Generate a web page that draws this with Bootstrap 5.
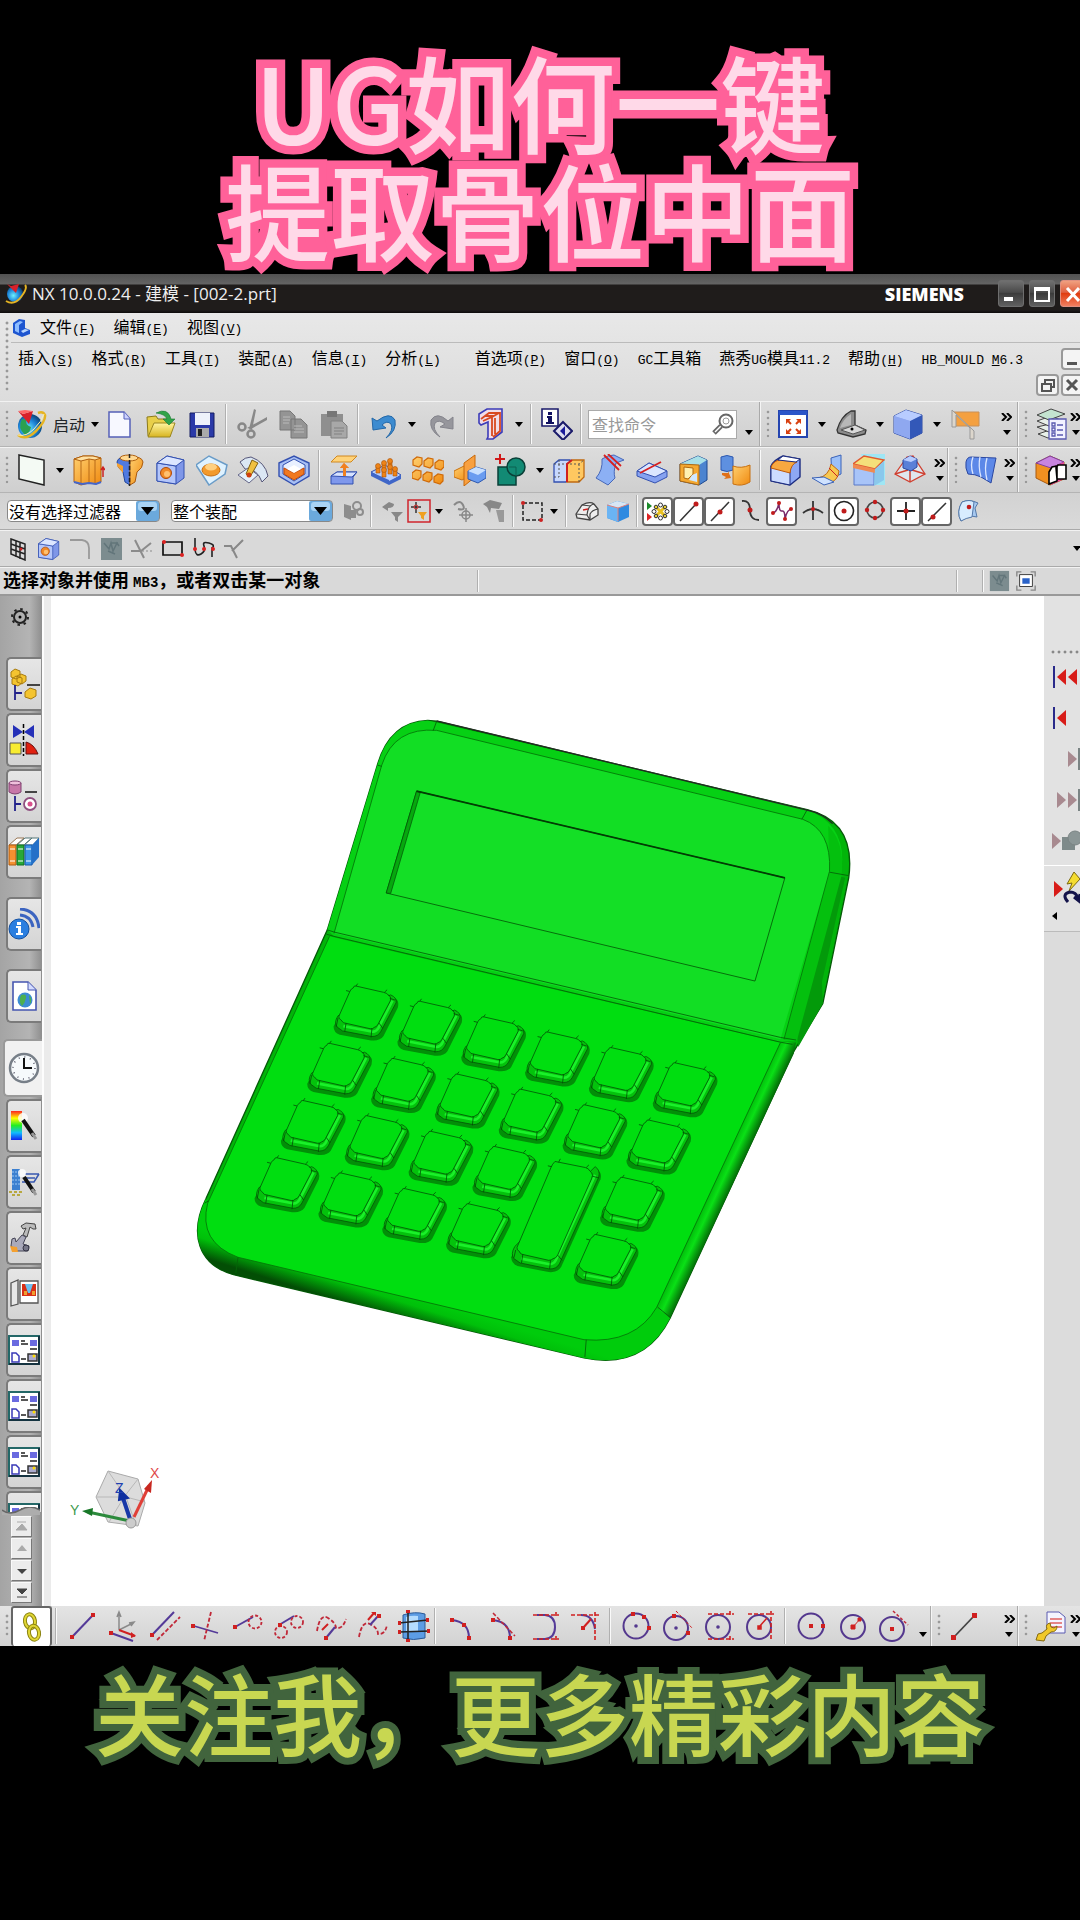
<!DOCTYPE html>
<html lang="zh-CN">
<head>
<meta charset="utf-8">
<meta name="viewport" content="width=device-width, initial-scale=1">
<title>NX 10.0.0.24 - 建模</title>
<link href="https://cdn.jsdelivr.net/npm/bootstrap@5.3.0/dist/css/bootstrap.min.css" rel="stylesheet">
<style>
body{background:#000;font-family:"Liberation Sans","Noto Sans CJK SC",sans-serif;font-size:16px;line-height:20px;color:#000;overflow-x:hidden}
svg{display:block;flex:none}
.headline{font:500 105px/108px "Noto Sans CJK SC",sans-serif;color:#ffd9e8;-webkit-text-stroke:17px #ff6199;stroke-linejoin:round;paint-order:stroke fill;padding:45px 0 13px}
.follow{font:500 89px/90px "Noto Sans CJK SC",sans-serif;color:#c8d751;-webkit-text-stroke:14px #41643d;stroke-linejoin:round;paint-order:stroke fill;padding:20px 0 164px}
.app{overflow:hidden}
.titlebar{height:39px;background:linear-gradient(#515151,#646464 10px,#1f1c1b 11px,#1f1c1b 36px,#0c0b0b);color:#eee;font-family:"Open Sans","Noto Sans CJK SC",sans-serif;font-size:17px}
.brand{font-weight:800;font-size:18px;margin-right:34px;color:#fff}
.winbtn{width:26px;height:27px;border:1px solid #6e6e6e;border-radius:3px;background:linear-gradient(#707070,#4a4a4a 45%,#3c3c3c 50%,#606060);padding:0;margin-right:5px;flex:none}
.winbtn.shut{background:linear-gradient(#f0a080,#e06040 45%,#e03c10 50%,#f08060);border-color:#e09080;margin-right:-6px}
.menus{background:linear-gradient(#e8e8e8,#dcdcdc);font-family:"Noto Sans CJK SC",sans-serif}
.menus a{color:#000;text-decoration:none;white-space:nowrap}
.lat{font-family:"Liberation Mono",monospace;font-size:13px}
.mrow1{height:29px;gap:18px}
.mrow1 svg{margin-right:-9px}
.mrow2{height:32px;gap:18px;border-top:1px solid #bbb;padding-left:7px}
.mdi{width:23px;height:22px;border:2px solid #999;border-radius:4px;background:#f4f4f4;padding:0;flex:none}
.mrow2,.mdis{margin-right:-4px}
.mdis{height:27px;gap:2px}
.grip{width:4px;flex:none;align-self:stretch;margin:8px 2px 8px 5px;background:radial-gradient(circle at 2px 2px,#999 1px,#f5f5f5 2px,transparent 2px) 0 0/4px 6px}
.tb{background:linear-gradient(#dcdcdc,#cfcfcf);border-top:1px solid #f2f2f2;border-bottom:1px solid #b4b4b4;height:46px}
.tb .btn,.sel .btn{padding:0;border:0;border-radius:3px;display:flex;align-items:center;justify-content:center;flex:1 1 0;height:38px;min-width:0}
.tb svg{width:32px;height:32px}
.tb .cr{flex:0 0 16px}
.tb .cr svg,.sel .cr svg{width:8px;height:5px}
.vr2{width:1px;align-self:stretch;margin:2px 4px;background:#fafafa;box-shadow:-1px 0 #b0b0b0;flex:none}
.grp{display:flex;align-items:center;flex:none}
.g1{width:41px}.g3{width:123px}.g3c{width:98px}.g1c{width:57px}
.gv{width:215px}.gf{width:304px}.gf2{width:432px}.gf3{width:166px}.gl{width:374px}.gc{width:125px}
.dock{border-left:1px solid #f5f5f5;box-shadow:-1px 0 #aaa;align-self:stretch;display:flex;align-items:center;flex:none}
.d258{width:258px}.d70{width:70px}.d87{width:87px}.d62{width:62px}
.tb .more{flex:1 1 16px;flex-direction:column;gap:9px;align-self:stretch;height:auto}
.d258 .more{padding-left:8px}
.tb .more svg.chev{width:11px;height:8px}
.tb .more svg.dn{width:8px;height:5px}
.tb .startbtn{flex:0 0 auto;gap:6px;padding-left:4px;width:88px;justify-content:flex-start;font-family:"Noto Sans CJK SC",sans-serif}
.tb .startbtn svg.dn{width:8px;height:5px}
.search{width:149px;height:29px;background:#fff;border:1px solid #aaa;margin-left:2px;flex:none;padding-right:2px}
.search input{border:0;background:none;font:16px/20px "Noto Sans CJK SC",sans-serif;width:112px;padding:0 3px;outline:0}
.search input::placeholder{color:#999;opacity:1}
.search svg{width:22px;height:22px}
.sel{background:linear-gradient(#d2d2d2,#dadada);height:37px;border-bottom:1px solid #aaa;padding-left:7px}
.sel .btn{flex:0 0 31px;height:29px}
.sel .btn.slim{flex-basis:28px}
.sel .btn.thin{flex-basis:24px}
.sel .btn svg{width:24px;height:24px}
.sel .btn.cr{flex-basis:16px}
.sel .btn.cr svg{width:8px;height:5px}
.sel .btn.on{border:2px solid #666;background:#fff;border-radius:4px}
.sel .btn.edge{margin-right:-5px}
.pick{appearance:none;height:22px;border:1px solid #888;border-radius:4px;padding:0 0 0 1px;font:16px/20px "Noto Sans CJK SC",sans-serif;color:#000;flex:none;
background:#fff url("data:image/svg+xml,%3Csvg xmlns='http://www.w3.org/2000/svg' width='23' height='20'%3E%3Crect width='23' height='20' rx='2' fill='%236ba9dc'/%3E%3Crect x='2' y='1' width='19' height='9' rx='3' fill='%23a9d3f4'/%3E%3Cpath d='M5 6h13l-6.500 8z' fill='%23000'/%3E%3C/svg%3E") right center no-repeat}
.p1{width:153px;margin-right:11px}.p2{width:162px;margin-right:6px}
.plain{background:#d9d9d9;border-top:1px solid #f2f2f2;padding-left:2px}
.status{height:29px;background:#d9d9d9;border-top:1px solid #f2f2f2;border-bottom:2px solid #999;font:bold 18px/26px "Noto Sans CJK SC",sans-serif;padding-left:3px}
.status .lat{font-size:14px}
.st1{width:475px}.st2{width:25px}.st3{width:96px}
.rail{width:42px;background:linear-gradient(90deg,#a4a4a4,#b4b4b4 70%,#8e8e8e);flex:none;gap:2px;position:relative;height:1010px;overflow:hidden}
.rail .cog{height:59px;border:0;background:none;padding:0 2px 18px 0}
.tab{height:54px;width:35px;margin-left:6px;border:2px solid #7b7b7b;border-right:0;border-radius:5px 0 0 5px;background:linear-gradient(#e6e6e6,#d4d4d4);padding:0;display:flex;align-items:center;justify-content:flex-start;flex:none}
.tab svg{width:32px;height:32px}
.tab.sp{margin-top:16px}
.tab.live{margin:14px 0 0 3px;width:39px;height:58px;padding-left:3px;background:#f1f1f1;border-color:#999}
.railnav{position:absolute;left:0;right:0;bottom:0;height:94px;background:linear-gradient(90deg,#a4a4a4,#b4b4b4 70%,#8e8e8e);padding:4px 0 0 11px;display:flex;flex-direction:column;gap:1px}
.railnav button{width:21px;height:21px;padding:0;border:1px solid #777;border-color:#fafafa #777 #777 #fafafa;background:#ececec}
.tear{position:absolute;left:2px;top:-5px}
.gutter{width:9px;background:#ebebeb;border-left:2px solid #fdfdfd;flex:none}
.view{background:#fff;min-width:0}
.side{width:36px;background:#dcdcdc;flex:none;overflow:hidden}
.side .pan{border-bottom:1px solid #bbb;background:#e2e2e2;padding-top:54px;height:336px}
.side button{display:block;border:0;background:none;padding:0 0 0 6px;height:41px}
.side .dots{height:4px;margin-left:7px;background:radial-gradient(circle at 2px 2px,#888 1px,#f5f5f5 2px,transparent 2px) 0 0/6px 4px;margin-bottom:2px}
.side .play{border-top:1px solid #fff;margin-top:4px;padding-top:1px}
.bot{height:40px;border:0;background:linear-gradient(#e4e4e4,#d2d2d2)}
.bot .link{flex:0 0 41px;height:40px;background:#fff;border:2px solid #666;border-bottom:0}
</style>
</head>
<body>
<svg width="0" height="0" class="position-absolute" aria-hidden="true">
<defs>
<linearGradient id="gb" x1="0" y1="0" x2="1" y2="1"><stop offset="0" stop-color="#cfe2ff"/><stop offset="1" stop-color="#3f6fd8"/></linearGradient>
<linearGradient id="go" x1="0" y1="0" x2="1" y2="1"><stop offset="0" stop-color="#ffd070"/><stop offset="1" stop-color="#f08a10"/></linearGradient>
<linearGradient id="gy" x1="0" y1="0" x2="0" y2="1"><stop offset="0" stop-color="#fff6a0"/><stop offset="1" stop-color="#d8b420"/></linearGradient>
<radialGradient id="gs" cx=".4" cy=".6" r=".6"><stop offset="0" stop-color="#6ff0ff"/><stop offset=".6" stop-color="#1d84d8"/><stop offset="1" stop-color="#0c4a80"/></radialGradient>
<linearGradient id="rb" x1="0" y1="0" x2="0" y2="1"><stop offset="0" stop-color="#f22"/><stop offset=".25" stop-color="#ff0"/><stop offset=".5" stop-color="#2e2"/><stop offset=".75" stop-color="#1bf"/><stop offset="1" stop-color="#12e"/></linearGradient>
</defs>
<symbol id="dn" viewBox="0 0 8 5"><path d="M0 0h8L4 5z"/></symbol>
<symbol id="ch" viewBox="0 0 11 8"><path d="M1 0l4 4-4 4M6 0l4 4-4 4" fill="none" stroke="#000" stroke-width="2"/></symbol>
<symbol id="nx" viewBox="0 0 32 32"><circle cx="15" cy="18" r="12" fill="url(#gs)"/><path d="M7 11q-5 9 3 16 5-2 6-8-6-2-5-7z" fill="#2ba050"/><path d="M3 27q8 6 18-4t9-16q-2-4-7-2" fill="none" stroke="#e6b422" stroke-width="2.500"/><path d="M3 27q8 2 16-6t10-15" fill="none" stroke="#fff3b0" stroke-width="1"/><path d="M3 3l5 3 10-3-4 13z" fill="#d8202a"/><path d="M3 3l7-1 8 1-10 3z" fill="#f66"/></symbol>
<symbol id="nxs" viewBox="0 0 24 24"><circle cx="11" cy="12" r="8" fill="url(#gs)"/><path d="M2 19q8 5 15-4t4-12" fill="none" stroke="#e6b422" stroke-width="2"/><path d="M3 2l4 2 8-2-3 9z" fill="#d8202a"/></symbol>
<symbol id="part" viewBox="0 0 20 20"><path d="M2 5l6-4 6 1v8l5 2v4l-8 3-9-4z" fill="#1d55d0"/><path d="M4 6l5-3 3 1-4 3v8l-4-2z" fill="#8dbcff"/><path d="M10 13l4-2 4 1-6 3z" fill="#b8d6ff"/></symbol>
<symbol id="new" viewBox="0 0 32 32"><path d="M5 4h15l6 7v18H5z" fill="#f7f8ff" stroke="#5560b8" stroke-width="1.500"/><path d="M20 4v7h6" fill="#cdd2ff" stroke="#5560b8"/></symbol>
<symbol id="open" viewBox="0 0 32 32"><path d="M2 9l9-1 2 3h12v17H3z" fill="#e8cf4a" stroke="#8c7a1a"/><path d="M3 29l6-14h21l-5 14z" fill="url(#gy)" stroke="#9a8620"/><path d="M11 5q12-6 15 6h4l-6 6-6-6h4q-2-5-11-6z" fill="#31a348" stroke="#1a7a30" stroke-width=".6"/></symbol>
<symbol id="save" viewBox="0 0 32 32"><path d="M4 5h24v24H4z" fill="#2b3aa8" stroke="#141c60"/><path d="M9 5h15v12H9z" fill="#eef2fb"/><path d="M10 20h13v9H10z" fill="#aaa"/><path d="M12 21h4v7h-4z" fill="#222"/></symbol>
<symbol id="cut" viewBox="0 0 32 32"><path d="M18 1l2 1-4 20-3-1zM31 9l0 3-16 9-4-1z" fill="#888"/><circle cx="15" cy="26" r="3.500" fill="none" stroke="#888" stroke-width="2.500"/><circle cx="6" cy="19" r="3.500" fill="none" stroke="#888" stroke-width="2.500"/></symbol>
<symbol id="copy" viewBox="0 0 32 32"><path d="M3 3h10l5 5v14H3zM14 11h10l6 6v13H14z" fill="#949494" stroke="#777"/><path d="M6 9h7M6 12h7M6 15h6M17 18h8M17 21h10M17 24h10" stroke="#bbb"/></symbol>
<symbol id="paste" viewBox="0 0 32 32"><path d="M3 6h22v22H3z" fill="#8f8f8f"/><path d="M9 3h10v6H9z" fill="#777"/><path d="M13 13h11l5 5v12H13z" fill="#a8a8a8" stroke="#808080"/><path d="M16 20h10M16 23h10M16 26h8" stroke="#808080"/></symbol>
<symbol id="undo" viewBox="0 0 32 32"><path d="M4 10l1 12 13-2-4-3q5-5 9-1 3 6-5 14 11-7 9-18-5-9-18 1z" fill="#3c8bd0" stroke="#2468a8"/></symbol>
<symbol id="redo" viewBox="0 0 32 32"><path d="M28 9v12l-13-2 5-3q-6-5-10-1-3 6 5 14Q4 22 6 12q6-9 17 1z" fill="#96969c" stroke="#84848c"/></symbol>
<symbol id="pipe" viewBox="0 0 32 32"><path d="M4 6l8-5h15v23l-9 7h-6l1-2V14l-7 3-2-2z" fill="#f0dce8" stroke="#3b3bb8" stroke-width="1.600"/><path d="M6 11l8-6h11v18l-7 6M8 13l9-4v19M17 9l7-4M10 8h9M20 10v16" fill="none" stroke="#d84820" stroke-width="1.800"/></symbol>
<symbol id="info" viewBox="0 0 32 32"><path d="M1 1h16v17H1z" fill="#fff" stroke="#1a1a6a" stroke-width="1.600"/><path d="M7 4h4v3H7zM6 8h5v6h2v2H5v-2h2v-4H6z" fill="#111160"/><path d="M22 14l9 9-9 9-9-9z" fill="#dde" stroke="#1a1a6a" stroke-width="2"/><path d="M24 18v10l-5-5z" fill="#1a1a9a"/></symbol>
<symbol id="mag" viewBox="0 0 22 22"><path d="M2 20l7-7" stroke="#666" stroke-width="5"/><path d="M3 19l6-6" stroke="#fff" stroke-width="1.500"/><circle cx="14" cy="8" r="6.500" fill="#fff" stroke="#666" stroke-width="2"/><circle cx="14" cy="8" r="3" fill="none" stroke="#999"/></symbol>
<symbol id="fit" viewBox="0 0 32 32"><path d="M2 3h28v26H2z" fill="#fff" stroke="#2545b0" stroke-width="2"/><path d="M2 3h28v4H2z" fill="#2b55c8"/><path d="M9 11h5l-5 5zM24 11v5l-5-5zM9 26v-5l5 5zM24 26h-5l5-5z" fill="#d84010"/><path d="M11 13l3 3M22 13l-3 3M11 24l3-3M22 24l-3-3" stroke="#d84010" stroke-width="2"/></symbol>
<symbol id="part3" viewBox="0 0 32 32"><path d="M2 22q4-14 14-19l4 0v14l11 5-1 4-12 3-15-4z" fill="#8c8c8c" stroke="#333" stroke-width="1.300"/><path d="M5 20q3-9 11-14v11z" fill="#b8b8b8"/><path d="M6 22l14-5 10 5-12 4z" fill="#d8d8d8" stroke="#555"/><circle cx="17" cy="21" r="1.500"/></symbol>
<symbol id="cube" viewBox="0 0 32 32"><path d="M2 8L14 2l16 5v18l-12 6L2 25z" fill="#6a86e0" stroke="#2c48a0"/><path d="M2 8l16 5V31L2 25z" fill="#8fa8f0"/><path d="M18 13l12-6v18l-12 6z" fill="#3358b8"/><path d="M2 8l12-6 16 5-12 6z" fill="#b8ccff"/></symbol>
<symbol id="clip" viewBox="0 0 32 32"><path d="M4 4h25v14H4z" fill="#f4a040" stroke="#c89058"/><path d="M2 2l22 21v8h-4V20L6 7v12H2z" fill="#dcd6cc" stroke="#999"/></symbol>
<symbol id="layer" viewBox="0 0 32 32"><g fill="#e8f0ea" stroke="#444"><path d="M3 26l10 4 10-4-8-4z"/><path d="M2 19l12 5 10-4-9-4z"/><path d="M2 13l12 5 14-5-12-5z"/><path d="M2 7l12 5 16-6L16 1z" fill="#c4e4d0"/></g><path d="M14 11h17v20H14z" fill="#f2f2ff" stroke="#5a5ab0" stroke-width="1.300"/><path d="M17 15h3v3h-3zM17 20h3v3h-3zM17 25h3v3h-3zM22 17h6M22 22h6M22 27h6" fill="none" stroke="#5a5ab0" stroke-width="1.300"/></symbol>
<symbol id="plane" viewBox="0 0 32 32"><path d="M3 1l25 5v25L3 25z" fill="#f4faf4" stroke="#222" stroke-width="1.500"/></symbol>
<symbol id="extr" viewBox="0 0 32 32"><path d="M1 5l9-3h10l8 2v24l-5 2-7-1-8 2-7-3z" fill="url(#go)" stroke="#b06010"/><path d="M1 5l7 2 8-2 6 1 6-2-8-2H10z" fill="#ffe0a0" stroke="#b06010"/><path d="M8 7v23M16 5v24M22 6v23" stroke="#b86a18" fill="none"/><path d="M1 28l8 2 7-1 7 1 5-2" stroke="#46c" fill="none" stroke-width="2"/><path d="M30 23V13m-2 3l2-3 2 3" stroke="#c22" stroke-width="1.500" fill="none"/></symbol>
<symbol id="revo" viewBox="0 0 32 32"><path d="M16 3Q4 2 3 8q0 6 6 10l2 10 5 3z" fill="#4f7ae0" stroke="#23479a"/><path d="M16 3q12-1 13 5 0 6-6 10l-2 10-5 3z" fill="url(#go)" stroke="#a85a10"/><ellipse cx="15" cy="4" rx="9" ry="3" fill="#ffd890" stroke="#b06010"/><path d="M3 9l6 3v7l-6-7z" fill="#f4a030"/><path d="M15.500 0v32" stroke="#222" stroke-width="1.500" stroke-dasharray="4 2"/></symbol>
<symbol id="hole" viewBox="0 0 32 32"><path d="M2 9l10-7 17 4v18l-8 6-19-3z" fill="#7f97e8" stroke="#3350b0"/><path d="M2 9l19 3v18L2 27z" fill="#b4c6fa" stroke="#3350b0"/><path d="M2 9l10-7 17 4-8 6z" fill="#dce6ff" stroke="#3350b0"/><circle cx="11" cy="19" r="5.500" fill="#f08a28" stroke="#b04808"/><circle cx="12" cy="20" r="3" fill="#ffc070"/></symbol>
<symbol id="boss" viewBox="0 0 32 32"><path d="M0 11L13 2l18 9-2 9-16 11z" fill="#dff2ff" stroke="#6a9cc8" stroke-width="1.500"/><ellipse cx="15" cy="16" rx="9" ry="6" fill="#f29a2c" stroke="#c86e10"/><ellipse cx="15" cy="13" rx="6" ry="3.500" fill="#ffd080"/></symbol>
<symbol id="rib" viewBox="0 0 32 32"><path d="M3 8Q8 3 14 3q14 5 17 19l-6 6Q20 14 8 15z" fill="#dbe7f4" stroke="#557"/><path d="M1 21l10-7 10 7-9 8z" fill="#e4f0fa" stroke="#668"/><path d="M15 6l6 3-8 14-4-3z" fill="#f0c040" stroke="#806010"/><circle cx="12" cy="21" r="2.500" fill="#d04010"/></symbol>
<symbol id="pock" viewBox="0 0 32 32"><path d="M1 9l15-7 15 7v13l-15 9-15-9z" fill="#a8c0f4" stroke="#3350b0" stroke-width="1.400"/><path d="M5 11l11-6 11 6v9l-11 7-11-7z" fill="#e8f0ff" stroke="#3350b0"/><path d="M6 14l10 5 10-5v6l-10 6-10-6z" fill="#f07820" stroke="#c04808"/><path d="M9 15l7-4 7 4-7 4z" fill="#fff"/></symbol>
<symbol id="offs" viewBox="0 0 32 32"><path d="M8 2h20l-6 6H2z" fill="#ffd37a" stroke="#d08820"/><path d="M14 20v-6h-3l4-5 5 5h-3v6z" fill="#f08020"/><path d="M2 22l6-4h20l-4 5v7H2z" fill="#7f98ec" stroke="#3350b0"/><path d="M2 22l6-4h20l-5 5z" fill="#d6e2ff" stroke="#3350b0"/><path d="M14 22v-8h-3l4-5 5 5h-3v8z" fill="#f08020"/></symbol>
<symbol id="patt" viewBox="0 0 32 32"><path d="M1 18l14-7 16 10-12 8z" fill="#b8d0ff" stroke="#3350b0"/><path d="M1 18l18 8v5L1 22zM19 27l12-6v4l-12 6z" fill="#3f66c8"/><g fill="#ee8418" stroke="#a85008" stroke-width=".6"><path d="M6 13h4v6H6zM12 10h4v6h-4zM18 7h4v6h-4zM12 17h4v6h-4zM18 14h4v6h-4zM23 16h4v6h-4z"/><circle cx="8" cy="12" r="2.500"/><circle cx="14" cy="9" r="2.500"/><circle cx="20" cy="7" r="2.500"/><circle cx="14" cy="16" r="2.500"/><circle cx="20" cy="13" r="2.500"/><circle cx="25" cy="15" r="2.500"/></g></symbol>
<symbol id="geom" viewBox="0 0 32 32"><g fill="url(#go)" stroke="#d06a08" stroke-width="1.200"><path d="M1 6l4-3 5 1v6l-3 3-6-2zM12 7l4-3 5 1v6l-3 3-6-2zM23 9l4-3 5 1v6l-3 3-6-2zM0 19l4-3 5 1v6l-3 3-6-2zM11 21l4-3 5 1v6l-3 3-6-2zM22 23l4-3 5 1v6l-3 3-6-2z"/></g></symbol>
<symbol id="trim" viewBox="0 0 32 32"><path d="M0 17l10-5 6 2v8l-8 4-8-3z" fill="url(#go)" stroke="#c87010"/><path d="M10 9L21 1v22l-11 9z" fill="#f8a040" stroke="#c86808"/><path d="M14 17l8-4 10 3v8l-8 5-10-4z" fill="#6a9cf0" stroke="#2c58b0"/><path d="M14 17l8-4 10 3-8 5z" fill="#c8e0ff"/></symbol>
<symbol id="unite" viewBox="0 0 32 32"><path d="M3 13h18v18H3z" fill="#128a74" stroke="#0a4038" stroke-width="1.500"/><circle cx="21" cy="13" r="9" fill="#128a74" stroke="#0a4038" stroke-width="1.500"/><path d="M14 13h7v9" fill="none" stroke="#0a6050"/><path d="M5 0v10M0 5h10" stroke="#d01818" stroke-width="2"/></symbol>
<symbol id="split" viewBox="0 0 32 32"><path d="M1 10l5-4h11v17l-4 5H1z" fill="#c8d8fc" stroke="#3350b0" stroke-width="1.300"/><path d="M14 10l5-4h12v17l-5 5H14z" fill="#ffc860" stroke="#c06a10" stroke-width="1.300"/><path d="M1 10h25l5-4M26 10v18M6 6v17H1" fill="none" stroke="#555" stroke-dasharray="2 2"/><path d="M14 28V10l5-4" stroke="#d02020" stroke-width="2" fill="none"/></symbol>
<symbol id="sheet" viewBox="0 0 32 32"><path d="M8 5q6-4 12-4l10 5-8 3q-3 9-1 15l-7 7-12-7q7-8 6-19z" fill="#8cb0f4" stroke="#4868b8"/><path d="M10 1l15 15M14 0l13 12" stroke="#d82020" stroke-width="1.800"/></symbol>
<symbol id="slab" viewBox="0 0 32 32"><path d="M1 17l12-8 18 8v6l-12 6-18-7z" fill="#86a2f0" stroke="#3350b0"/><path d="M1 17l12-8 18 8-12 6z" fill="#dbe6ff" stroke="#3350b0"/><path d="M4 19L25 8" stroke="#d82020" stroke-width="1.800"/></symbol>
<symbol id="shell" viewBox="0 0 32 32"><path d="M2 10l18-8 9 4v20l-8 5-19-4z" fill="#4c84d0" stroke="#1c4890"/><path d="M2 10l18-8 9 4-8 5z" fill="#a8e0e8"/><path d="M2 10l19 1v20L2 27z" fill="#f4a830" stroke="#b06a10"/><path d="M6 13l9 1v6l-5 5-4-1z" fill="#fff0b0" stroke="#b06a10"/><path d="M14 21l5-2v9l-8-2z" fill="#cfe8ff"/></symbol>
<symbol id="thick" viewBox="0 0 32 32"><path d="M2 3q6-3 12 0v13q-6 3-12 0z" fill="#5e90e0" stroke="#2c58b0"/><path d="M14 12q8 3 17-1v17q-8 5-17 2z" fill="url(#go)" stroke="#c87010"/><path d="M3 19h6v-2l3 7-7 1 2-2-4-2z" fill="#e07018"/></symbol>
<symbol id="blend" viewBox="0 0 32 32"><path d="M1 12q3-6 12-10l17 3v18l-10 8-19-4z" fill="#8ea8f4" stroke="#1c2c80" stroke-width="1.400"/><path d="M1 12q5-5 19-1l0 20-19-4z" fill="#cddcff" stroke="#1c2c80"/><path d="M1 14Q2 8 9 6l18 2q-6 2-7 11z" fill="#f8a840" stroke="#c05808"/><path d="M13 2l17 3-4 3-18-2z" fill="#fff" stroke="#1c2c80"/></symbol>
<symbol id="fblend" viewBox="0 0 32 32"><path d="M20 4l10-3v19l-9 4z" fill="#9cc0f8" stroke="#3a62b8"/><path d="M20 10q-2 12-13 14l11 5q9-2 10-12z" fill="#f8c850" stroke="#c06a10"/><path d="M1 24l12-1 10 5-10 3z" fill="#cfe2ff" stroke="#3a62b8"/><path d="M18 14l9 9" stroke="#c22"/></symbol>
<symbol id="draft" viewBox="0 0 32 32"><path d="M8 0h24v31H22z" fill="#9fe6f4"/><path d="M1 12l20 4v15H1z" fill="#a8c4f8" stroke="#5878c8"/><path d="M0 10L11 2l20 4-9 9z" fill="#f4e07a" stroke="#e05a30" stroke-width="1.500"/><path d="M0 10l22 5v4L0 14z" fill="#f08a50"/><path d="M22 15l9-8v19l-10 6z" fill="#8ac8ec"/></symbol>
<symbol id="scale" viewBox="0 0 32 32"><path d="M1 20L13 3l6-1L31 20 16 28z" fill="#dfe6ee" stroke="#d04030" stroke-width="1.300"/><path d="M16 15v13M1 20l13-4M31 20l-13-4" stroke="#d04030" fill="none" stroke-width="1.500"/><path d="M9 6l7-4 7 3v8l-6 4-8-3z" fill="#5a80d8" stroke="#2c48a0"/><path d="M9 6l7-4 7 3-6 3z" fill="#b8ccff"/></symbol>
<symbol id="surf" viewBox="0 0 32 32"><path d="M1 8q1-5 5-5l25 1-5 25-10-6q-6-3-13-3-3-6-2-12z" fill="#5c88e8" stroke="#2c48a0"/><path d="M8 3q-3 8 0 17M15 3q-2 9 1 20M22 4q-3 10 0 22" stroke="#dbe6ff" fill="none" stroke-width="1.300"/></symbol>
<symbol id="asm" viewBox="0 0 32 32"><path d="M1 9l14-7 14 6v17l-14 6L1 24z" fill="#f09020" stroke="#a85a10"/><path d="M1 9l14-7 14 6-13 6z" fill="#c884e0" stroke="#8040a0"/><path d="M16 14l13-6v17l-13 6z" fill="#e84898"/><path d="M14 18l3-5 5-1v15l-8 3zM21 14l2-3 8 0v14h-9z" fill="#fff" stroke="#000" stroke-width="1.600"/></symbol>
<symbol id="lk" viewBox="0 0 24 24"><path d="M3 5l7 2v14l-7-3zM9 11h6v8H9z" fill="#8d8d8d"/><circle cx="16" cy="7" r="4" fill="none" stroke="#8d8d8d" stroke-width="2"/><circle cx="19" cy="13" r="3" fill="none" stroke="#8d8d8d" stroke-width="2"/></symbol>
<symbol id="fl1" viewBox="0 0 24 24"><path d="M11 13h12l-5 5v5l-3-2v-3z" fill="#888"/><path d="M9 3L2 8l6 4V9q6 0 6-4" fill="#888"/></symbol>
<symbol id="fl2" viewBox="0 0 24 24"><path d="M1 1h22v22H1z" fill="none" stroke="#d0242c" stroke-width="1.500"/><path d="M9 3v11M4 8h10" stroke="#333" stroke-width="1.500"/><circle cx="9" cy="8" r="2" fill="none" stroke="#d33"/><path d="M11 13h9l-3 4v4l-3-2v-2z" fill="#f0a020"/></symbol>
<symbol id="fl3" viewBox="0 0 24 24"><path d="M3 6q6-6 9 0t-5 4" fill="none" stroke="#888" stroke-width="2"/><circle cx="15" cy="16" r="4" fill="none" stroke="#888" stroke-width="1.500"/><path d="M15 9v14M8 16h14" stroke="#888" stroke-width="1.500"/></symbol>
<symbol id="fl4" viewBox="0 0 24 24"><path d="M1 5l7-4 12 3-3 6-8-1-1 5-3-6z" fill="#888"/><path d="M14 11h8v12h-5z" fill="#999"/></symbol>
<symbol id="rsel" viewBox="0 0 24 24"><path d="M3 4h19v17H3z" fill="none" stroke="#222" stroke-width="1.500" stroke-dasharray="4 2"/><circle cx="3" cy="4" r="2" fill="#c22"/><circle cx="21" cy="21" r="2" fill="#c22"/></symbol>
<symbol id="wire" viewBox="0 0 24 24"><path d="M1 15l6-9q8-4 12-1l4 5v6l-8 5-13-2z" fill="#eee" stroke="#444" stroke-width="1.300"/><path d="M1 15l11 1 3 5M12 16q1-10 7-11M15 21v-6q2-4 8-5M7 6l9 1" fill="none" stroke="#444" stroke-width="1.200"/><path d="M8 11l5-1" stroke="#c22" stroke-width="1.500"/></symbol>
<symbol id="hl" viewBox="0 0 24 24"><path d="M1 6l10-4 12 3v13l-11 5L1 19z" fill="#2f8ae0"/><path d="M1 6l11 3v14L1 19z" fill="#6ab4f4"/><path d="M1 6l10-4 12 3-11 4z" fill="#d8e6f4"/><path d="M1 6l11 3 11-4M12 9v13" stroke="#e0807a" fill="none"/></symbol>
<symbol id="s0" viewBox="0 0 24 24"><path d="M1 3l5 4-5 4z" fill="#1a8a2a"/><path d="M1 14l5 4-5 4z" fill="#d22"/><path d="M10 8l9 9M19 8l-9 9" stroke="#e8c020" stroke-width="3"/><g fill="#fff" stroke="#333"><circle cx="14.500" cy="6" r="2"/><circle cx="14.500" cy="19" r="2"/><circle cx="8" cy="12.500" r="2"/><circle cx="21" cy="12.500" r="2"/></g><g fill="#e8d030" stroke="#333"><circle cx="10" cy="8" r="1.800"/><circle cx="19" cy="8" r="1.800"/><circle cx="10" cy="17" r="1.800"/><circle cx="19" cy="17" r="1.800"/></g></symbol>
<symbol id="s1" viewBox="0 0 24 24"><path d="M3 22L20 4" stroke="#333" stroke-width="1.500"/><circle cx="19" cy="5" r="2.500" fill="#c01c1c"/></symbol>
<symbol id="s2" viewBox="0 0 24 24"><path d="M3 22L21 3" stroke="#333" stroke-width="1.500"/><circle cx="12" cy="13" r="2.500" fill="#c01c1c"/></symbol>
<symbol id="s3" viewBox="0 0 24 24"><path d="M3 2q8-1 8 9t9 10" fill="none" stroke="#333" stroke-width="1.800"/><circle cx="11" cy="11" r="2.500" fill="#c01c1c"/></symbol>
<symbol id="s4" viewBox="0 0 24 24"><path d="M3 14q4-1 6-10 0 9 3 8t3 8q2-10 7-10" fill="none" stroke="#7a2a6a" stroke-width="1.500"/><g fill="#c01c1c"><circle cx="3" cy="14" r="2"/><circle cx="9" cy="4" r="2"/><circle cx="15" cy="20" r="2"/><circle cx="21" cy="10" r="2"/></g></symbol>
<symbol id="s5" viewBox="0 0 24 24"><path d="M12 2v19M2 14q10-8 20 0" fill="none" stroke="#333" stroke-width="1.800"/><circle cx="12" cy="10" r="2" fill="#c01c1c"/></symbol>
<symbol id="s6" viewBox="0 0 24 24"><circle cx="12" cy="12" r="9.500" fill="none" stroke="#222" stroke-width="1.600"/><circle cx="12" cy="12" r="2.500" fill="#c01c1c"/></symbol>
<symbol id="s7" viewBox="0 0 24 24"><circle cx="12" cy="11" r="8" fill="none" stroke="#444" stroke-width="1.600"/><g fill="#c01c1c"><circle cx="12" cy="3" r="2.200"/><circle cx="12" cy="19" r="2.200"/><circle cx="4" cy="11" r="2.200"/><circle cx="20" cy="11" r="2.200"/></g></symbol>
<symbol id="s8" viewBox="0 0 24 24"><path d="M12 3v18M3 12h18" stroke="#222" stroke-width="1.800"/><circle cx="12" cy="12" r="2.500" fill="#c01c1c"/></symbol>
<symbol id="s9" viewBox="0 0 24 24"><path d="M3 22L21 4" stroke="#333" stroke-width="1.500"/><circle cx="8" cy="18" r="2.500" fill="#c01c1c"/></symbol>
<symbol id="s10" viewBox="0 0 24 24"><path d="M6 3q8-3 16 1l-3 5 2 9-6-1q-6 2-10 5-5-9 1-19z" fill="#a6c8f0" stroke="#5478a8"/><path d="M6 3q8-3 12 0l-2 15q-6 1-11 4-5-9 1-19z" fill="#d8ecff" stroke="#5478a8"/><circle cx="13" cy="8" r="2.300" fill="#c01c1c"/></symbol>
<symbol id="r0" viewBox="0 0 24 24"><path d="M5 2l14 5v16L5 17zM5 7l14 5M5 12l14 5M10 4v16M14 6v16" fill="none" stroke="#222" stroke-width="1.500"/><circle cx="15" cy="12" r="1.500" fill="#c22"/></symbol>
<symbol id="r2" viewBox="0 0 24 24"><path d="M2 3h12q7 1 7 8v11" fill="none" stroke="#999" stroke-width="1.800"/></symbol>
<symbol id="r3" viewBox="0 0 24 24"><path d="M2 1h21v22H2z" fill="#7c8c8f"/><path d="M5 6l5 6 2-6 2 8 4-8 2 3M12 6h7M9 14l7 3" stroke="#62757a" fill="none" stroke-width="1.500"/></symbol>
<symbol id="r4" viewBox="0 0 24 24"><path d="M5 3l9 18M1 14h10l10-8" stroke="#8b8b8b" stroke-width="2" fill="none"/><path d="M12 14h10" stroke="#8b8b8b" stroke-dasharray="2 2"/></symbol>
<symbol id="r5" viewBox="0 0 24 24"><path d="M2 5h19v13H2z" fill="none" stroke="#111" stroke-width="1.700"/><circle cx="3" cy="5" r="2" fill="#d22"/><circle cx="21" cy="18" r="2" fill="#d22"/></symbol>
<symbol id="r6" viewBox="0 0 24 24"><path d="M3 1v12q1 7 6 4t3-8 5-3 3 5v9" fill="none" stroke="#222" stroke-width="1.600"/><g fill="#d22"><circle cx="3" cy="12" r="2"/><circle cx="12" cy="12" r="2"/><circle cx="21" cy="12" r="2"/></g></symbol>
<symbol id="r7" viewBox="0 0 24 24"><path d="M1 9h7l6 12M9 14L20 3" stroke="#888" stroke-width="2" fill="none"/></symbol>
<symbol id="full" viewBox="0 0 24 24"><path d="M2 7V2h5M17 2h5v5M22 17v5h-5M7 22H2v-5" fill="none" stroke="#888" stroke-width="1.500"/><path d="M5 5h14v13H5z" fill="#fff" stroke="#333"/><path d="M8 9h8v6H8z" fill="#2a62c8"/></symbol>
<symbol id="t0" viewBox="0 0 32 32"><g fill="#f4c430" stroke="#a87c10"><path d="M3 4l4-3 5 2v6l-4 2-5-2zM4 11l4-3 6 2v5l-4 3-6-2zM9 8l4-2 5 2v5l-4 3-5-2zM17 24l5-4 6 2v6l-5 3-6-2z"/></g><path d="M7 17v15M7 25h7" stroke="#22228a" stroke-width="1.800"/><path d="M19 17h13" stroke="#111" stroke-width="1.500"/></symbol>
<symbol id="t1" viewBox="0 0 32 32"><path d="M5 1l10 7-10 6zM26 1L16 8l10 6z" fill="#2530b8"/><path d="M15.500 0v32" stroke="#000" stroke-dasharray="4 2" stroke-width="1.500"/><path d="M2 19h11v11H2z" fill="#f8ec30" stroke="#555"/><path d="M18 18q8 2 12 12H18z" fill="#e02010" stroke="#611"/></symbol>
<symbol id="t2" viewBox="0 0 32 32"><path d="M1 3v9q6 4 12 0V3z" fill="#c878a8" stroke="#804070"/><ellipse cx="7" cy="3" rx="6" ry="2" fill="#f0c0dc" stroke="#804070"/><path d="M7 16v15M7 24h6" stroke="#22228a" stroke-width="1.800"/><path d="M17 12h12" stroke="#111" stroke-width="1.500"/><circle cx="22" cy="24" r="6" fill="#fff" stroke="#905080" stroke-width="1.800"/><circle cx="22" cy="24" r="2.500" fill="#d8508c"/></symbol>
<symbol id="t3" viewBox="0 0 32 32"><path d="M1 9l8-7h7l-8 7z" fill="#fff" stroke="#975"/><path d="M9 9l8-7h7l-8 7zM16 9l8-7h7l-6 7z" fill="#fff" stroke="#577"/><path d="M1 9h7v20H1z" fill="#f49030" stroke="#b05c10"/><path d="M9 9h7v20H9z" fill="#28a838" stroke="#107020"/><path d="M17 9h7v20h-7z" fill="#3c94e8" stroke="#1858a8"/><path d="M24 9l7-7v19l-7 8z" fill="#2470c8"/><path d="M2 13h5M10 13h5M18 13h5M2 25h5M10 25h5M18 25h5" stroke="#fff"/></symbol>
<symbol id="t4" viewBox="0 0 32 32"><circle cx="11" cy="21" r="10" fill="#2b7fe0" stroke="#1450a0"/><path d="M9 14h4v3H9zM8 18h5v7h2v2H8v-2h2v-5H8z" fill="#fff"/><path d="M12 1q17 1 19 19M12 7q11 1 13 12" fill="none" stroke="#3c64c0" stroke-width="3"/></symbol>
<symbol id="t5" viewBox="0 0 32 32"><path d="M5 2h15l8 8v20H5z" fill="#fff" stroke="#4656b0" stroke-width="1.600"/><path d="M20 2v8h8" fill="#d4dcff" stroke="#4656b0"/><circle cx="17" cy="20" r="7.500" fill="#3c8cd4"/><path d="M13 15q6-2 5 3t-4 8q-4-4-1-11zM21 15q4 4 1 9z" fill="#4cb050"/></symbol>
<symbol id="t6" viewBox="0 0 32 32"><circle cx="16" cy="16" r="14" fill="#f6fafc" stroke="#777f88" stroke-width="2.500"/><circle cx="16" cy="16" r="11" fill="none" stroke="#556" stroke-width="1.500" stroke-dasharray="1 4.760"/><path d="M16 6v10h8" fill="none" stroke="#111" stroke-width="2"/></symbol>
<symbol id="t7" viewBox="0 0 32 32"><path d="M3 1h11v29H3z" fill="url(#rb)"/><circle cx="15" cy="8" r="5" fill="#fff" opacity=".8"/><path d="M15 10l11 16" stroke="#111" stroke-width="4"/><path d="M24 23l4 6" stroke="#999" stroke-width="3"/></symbol>
<symbol id="t8" viewBox="0 0 32 32"><path d="M4 3h8v21H4z" fill="#3c80d0"/><path d="M4 6h8M4 10h8M4 14h8M4 18h8" stroke="#9cc8f4" stroke-dasharray="2 1"/><path d="M1 26h13M4 29h9" stroke="#b8a840" stroke-dasharray="3 2" stroke-width="2"/><path d="M17 8h14M14 16h12l5-8M18 12l9 0" stroke="#3858b0" stroke-width="1.500" fill="none"/><circle cx="14" cy="7" r="4" fill="#fff" opacity=".8"/><path d="M16 11l10 15" stroke="#111" stroke-width="4"/><path d="M24 23l4 6" stroke="#999" stroke-width="3"/></symbol>
<symbol id="t9" viewBox="0 0 32 32"><path d="M13 4l5-3 9 1 1 5-3 0-3-2-3 10-4-2 3-7-3 1z" fill="#bbb" stroke="#444"/><path d="M4 17l3-1 1 4 6-7 4 2-3 7 6 2-1 5H9l-6-5z" fill="#aab" stroke="#445"/><circle cx="18" cy="26" r="3" fill="#778" stroke="#334"/><path d="M2 24l7 1 1 5H4z" fill="#f4a030"/></symbol>
<symbol id="t10" viewBox="0 0 32 32"><path d="M3 5l7-3v24l-7 2z" fill="#e8e8e8" stroke="#555" stroke-width="1.300"/><path d="M12 3h18v22H12z" fill="#fff" stroke="#555" stroke-width="1.300"/><path d="M14 6h14v12H14z" fill="#d83018"/><path d="M17 6h8l-3 9h-2z" fill="#6cc0f0"/><path d="M16 13h3v4h-3zM24 13h3v4h-3z" fill="#f0a030"/></symbol>
<symbol id="t11" viewBox="0 0 32 32"><path d="M1 2h30v28H1z" fill="#fff" stroke="#246868" stroke-width="2"/><path d="M31 2v28H1" fill="none" stroke="#123" stroke-width="1.500"/><path d="M4 6h7v6H4zM22 6h7v6h-7z" fill="#6a6ae0"/><path d="M13 7h4M13 10h7M13 25h5M22 15h7" stroke="#222" stroke-width="1.500"/><path d="M4 19h4l3 3v6H4z" fill="#fff" stroke="#3a3ab8" stroke-width="1.500"/><path d="M20 20h9v7h-9z" fill="#aac" stroke="#333" stroke-width="1.500"/><circle cx="26" cy="22" r="1.500" fill="#fd0"/></symbol>
<symbol id="chain" viewBox="0 0 32 32"><g fill="none" transform="rotate(-10 16 16)"><ellipse cx="15" cy="10" rx="5" ry="7" stroke="#8c8410" stroke-width="4"/><ellipse cx="15" cy="10" rx="5" ry="7" stroke="#e0d634" stroke-width="2"/><ellipse cx="17" cy="22" rx="5" ry="7" stroke="#8c8410" stroke-width="4"/><ellipse cx="17" cy="22" rx="5" ry="7" stroke="#e0d634" stroke-width="2"/></g></symbol>
<symbol id="b0" viewBox="0 0 32 32"><path d="M6 27L27 5" stroke="#543a98" stroke-width="2"/><path d="M4 25h4v4H4zM25 3h4v4h-4z" fill="#d02020"/></symbol>
<symbol id="b1" viewBox="0 0 32 32"><path d="M12 20V3m-2 4l2-5 2 5M12 20l14-7m-4 0l5-1-3 4" stroke="#8a8a8a" stroke-width="1.500" fill="none"/><path d="M4 23l22 8" stroke="#543a98" stroke-width="2"/><path d="M12 20l16 6" stroke="#d02020" stroke-width="2"/><path d="M2 21h4v4H2zM24 22l5 4-5 2z" fill="#d02020"/></symbol>
<symbol id="b2" viewBox="0 0 32 32"><path d="M3 25L25 2" stroke="#543a98" stroke-width="2"/><path d="M8 30L31 7" stroke="#c02838" stroke-width="1.800" stroke-dasharray="4 2"/><path d="M1 23h4v4H1z" fill="#d02020"/></symbol>
<symbol id="b3" viewBox="0 0 32 32"><path d="M4 16l24 7" stroke="#543a98" stroke-width="1.800"/><path d="M21 2l-7 29" stroke="#c02838" stroke-width="1.800" stroke-dasharray="4 2"/><path d="M1 14h4v4H1z" fill="#d02020"/></symbol>
<symbol id="b4" viewBox="0 0 32 32"><path d="M3 17L21 7" stroke="#543a98" stroke-width="2"/><circle cx="23" cy="12" r="6.500" fill="none" stroke="#c02838" stroke-width="1.800" stroke-dasharray="3 2"/><path d="M1 15h4v4H1z" fill="#d02020"/></symbol>
<symbol id="b5" viewBox="0 0 32 32"><path d="M5 15L20 6" stroke="#543a98" stroke-width="2"/><circle cx="23" cy="12" r="6" fill="none" stroke="#c02838" stroke-width="1.800" stroke-dasharray="3 2"/><circle cx="7" cy="22" r="6" fill="none" stroke="#c02838" stroke-width="1.800" stroke-dasharray="3 2"/><path d="M4 13h4v4H4z" fill="#d02020"/></symbol>
<symbol id="b6" viewBox="0 0 32 32"><path d="M2 21Q5 3 13 8t8 10q7 1 10-9" fill="none" stroke="#c02838" stroke-width="1.800" stroke-dasharray="4 2"/><path d="M11 28l9-11" stroke="#543a98" stroke-width="2"/><path d="M7 20l6-6" stroke="#d02020" stroke-width="2"/><path d="M9 26h4v4H9z" fill="#d02020"/></symbol>
<symbol id="b7" viewBox="0 0 32 32"><path d="M2 27Q5 10 13 14t8 10q7 1 9-9" fill="none" stroke="#c02838" stroke-width="1.800" stroke-dasharray="4 2"/><path d="M13 15l9-10" stroke="#543a98" stroke-width="2"/><path d="M11 10l6-7" stroke="#d02020" stroke-width="2"/><path d="M20 4h4v4h-4zM14 2h5v4z" fill="#d02020"/></symbol>
<symbol id="b8" viewBox="0 0 32 32"><path d="M5 5q12-4 22-1v24q-12 3-22 0z" fill="#5c9ce4" stroke="#2a5a98"/><path d="M8 7q6-2 12-1v15q-6 2-12 0z" fill="#b4dcff"/><path d="M10 1v30M1 13l29-3M1 22l31-1" stroke="#222" stroke-width="1.500"/><path d="M8 0h4v3H8zM8 29h4v3H8zM0 11h3v4H0zM28 8h3v4h-3zM0 20h3v4H0zM29 19h3v4h-3z" fill="#d02020"/></symbol>
<symbol id="b9" viewBox="0 0 32 32"><path d="M7 10q17 2 17 18" fill="none" stroke="#543a98" stroke-width="2"/><path d="M5 8h4v4H5zM17 13h4v4h-4zM22 26h4v4h-4z" fill="#d02020"/></symbol>
<symbol id="b10" viewBox="0 0 32 32"><path d="M7 10q17 2 17 18" fill="none" stroke="#543a98" stroke-width="2"/><path d="M7 3l22 23" stroke="#c02838" stroke-width="1.500" stroke-dasharray="4 2"/><path d="M5 8h4v4H5zM22 26h4v4h-4z" fill="#d02020"/></symbol>
<symbol id="b11" viewBox="0 0 32 32"><path d="M9 5h8q10 1 10 12t-10 12H9" fill="none" stroke="#543a98" stroke-width="2"/><path d="M5 5h26M5 29h26M28 2v6M28 26v6" stroke="#d02020" stroke-width="1.600" stroke-dasharray="4 2"/></symbol>
<symbol id="b12" viewBox="0 0 32 32"><path d="M12 5q12 0 14 14" fill="none" stroke="#543a98" stroke-width="2"/><path d="M2 5h28M26 2v29" stroke="#d02020" stroke-width="1.600" stroke-dasharray="4 2"/><path d="M14 18l8-9" stroke="#d02020" stroke-width="2"/><path d="M12 16h4v4h-4z" fill="#d02020"/></symbol>
<symbol id="c0" viewBox="0 0 32 32"><circle cx="16" cy="16" r="12.500" fill="none" stroke="#54388e" stroke-width="2"/><circle cx="16" cy="16" r="1.800" fill="#54388e"/><path d="M11 2h4v4h-4zM22 5h4v4h-4zM27 16h4v4h-4z" fill="#d02020"/></symbol>
<symbol id="c1" viewBox="0 0 32 32"><circle cx="15" cy="18" r="12" fill="none" stroke="#54388e" stroke-width="2"/><circle cx="15" cy="18" r="1.800" fill="#54388e"/><path d="M15 1l17 18" stroke="#d02020" stroke-dasharray="3 2"/><path d="M11 4h4v4h-4zM25 21h4v4h-4z" fill="#d02020"/></symbol>
<symbol id="c2" viewBox="0 0 32 32"><circle cx="15" cy="17" r="12" fill="none" stroke="#54388e" stroke-width="2"/><circle cx="15" cy="17" r="1.800" fill="#54388e"/><path d="M5 4h26M5 29h26M27 1v6M27 26v6" stroke="#d02020" stroke-width="1.600" stroke-dasharray="4 2"/></symbol>
<symbol id="c3" viewBox="0 0 32 32"><circle cx="15" cy="17" r="12" fill="none" stroke="#54388e" stroke-width="2"/><path d="M4 4h26M27 1v30" stroke="#d02020" stroke-width="1.600" stroke-dasharray="4 2"/><path d="M15 17l8-9M14 16h3v3h-3z" stroke="#d02020" fill="#d02020" stroke-width="1.500"/></symbol>
<symbol id="c4" viewBox="0 0 32 32"><circle cx="16" cy="16" r="12.500" fill="none" stroke="#54388e" stroke-width="2"/><path d="M14 14h4v4h-4zM26 14h4v4h-4z" fill="#d02020"/></symbol>
<symbol id="c5" viewBox="0 0 32 32"><circle cx="16" cy="17" r="12" fill="none" stroke="#54388e" stroke-width="2"/><path d="M16 17l7-8M14 15h4v4h-4zM21 8h3v3h-3z" stroke="#d02020" fill="#d02020"/></symbol>
<symbol id="c6" viewBox="0 0 32 32"><circle cx="14" cy="19" r="12" fill="none" stroke="#54388e" stroke-width="2"/><path d="M15 1l15 14" stroke="#c02838" stroke-dasharray="3 2" stroke-width="1.500"/><path d="M12 17h4v4h-4z" fill="#d02020"/></symbol>
<symbol id="c7" viewBox="0 0 32 32"><path d="M6 27L26 6" stroke="#444" stroke-width="1.800"/><path d="M3 25h5v5H3zM24 3h5v5h-5z" fill="#d02020"/></symbol>
<symbol id="wr" viewBox="0 0 32 32"><path d="M12 2h12l6 5v16H12z" fill="#f4f4ff" stroke="#5a5ab0"/><path d="M15 9h12M15 13h12M15 17h12" stroke="#e06060" stroke-width="1.500"/><path d="M1 30l2-6 4-1 5-4q-2-5 3-6l1 4 3 1 3-2q0 6-6 6l-5 4-2 5z" fill="#f0c828" stroke="#866a10"/></symbol>
<symbol id="key" viewBox="340 650 160 140" overflow="visible">
<path d="M353 735l-9 18q0 14 14 19l70 13q20 2 28-10l32-66q4-18-8-22l-18-10z" fill="#028f08"/>
<path d="M354 728q-10 16-2 26l12 9 66 13q14 0 20-12l34-66q2-12-12-18z" fill="#04c20c" stroke="#044c06" stroke-width="1.600"/>
<path d="M366 752l66 13q8-1 12-8l32-64" fill="none" stroke="#1af02a" stroke-width="6" stroke-linejoin="round"/>
<path d="M390 660q3-1 6 0l60 14q9 2 10 6l5 4q2 5 0 10l-27 53q-3 7-9 8-3 4-9 3l-60-14-6-7q-5-2-4-8l25-58q3-6 7-7z" fill="#00de10" stroke="#035006" stroke-width="1.800"/>
<path d="M354 733l-4 20M372 745l-3 20M430 757l-2 21M446 745l8 12M470 688l12 4M394 660l4-6M458 674l6-6M380 672l-8-2" fill="none" stroke="#044c06" stroke-width="1.800"/>
</symbol>
</svg>

<header class="text-center"><h1 class="headline m-0">UG如何一键<br>提取骨位中面</h1></header>

<main class="app">
<div class="titlebar d-flex align-items-center">
<svg width="24" height="24" class="ms-1"><use href="#nxs"/></svg><span class="ms-1 text-nowrap me-auto">NX 10.0.0.24 - 建模 - [002-2.prt]</span>
<span class="brand">SIEMENS</span>
<button class="winbtn" aria-label="最小化"><svg width="24" height="24"><path d="M5 15h9v4H5z" fill="#fff"/></svg></button>
<button class="winbtn" aria-label="最大化"><svg width="24" height="24"><path d="M5 6h14v13H5z" fill="none" stroke="#fff" stroke-width="2"/><path d="M4 5h16v4H4z" fill="#fff"/></svg></button>
<button class="winbtn shut" aria-label="关闭"><svg width="24" height="24"><path d="M6 6l12 13M18 6L6 19" stroke="#fff" stroke-width="3"/></svg></button>
</div>
<nav class="menus d-flex">
<div class="grip"></div>
<div class="flex-grow-1">
<div class="mrow1 d-flex align-items-center">
<svg width="20" height="20"><use href="#part"/></svg>
<a href="#">文件<span class="lat">(<u>F</u>)</span></a><a href="#">编辑<span class="lat">(<u>E</u>)</span></a><a href="#">视图<span class="lat">(<u>V</u>)</span></a>
</div>
<div class="mrow2 d-flex align-items-center">
<a href="#">插入<span class="lat">(<u>S</u>)</span></a><a href="#">格式<span class="lat">(<u>R</u>)</span></a><a href="#">工具<span class="lat">(<u>T</u>)</span></a><a href="#">装配<span class="lat">(<u>A</u>)</span></a><a href="#">信息<span class="lat">(<u>I</u>)</span></a><a href="#" class="me-3">分析<span class="lat">(<u>L</u>)</span></a><a href="#">首选项<span class="lat">(<u>P</u>)</span></a><a href="#">窗口<span class="lat">(<u>O</u>)</span></a><a href="#"><span class="lat">GC</span>工具箱</a><a href="#">燕秀<span class="lat">UG</span>模具<span class="lat">11.2</span></a><a href="#">帮助<span class="lat">(<u>H</u>)</span></a><a href="#"><span class="lat">HB_MOULD <u>M</u>6.3</span></a>
<button class="mdi ms-auto" aria-label="最小化窗口"><svg width="19" height="18"><path d="M4 12h10v3H4z" fill="#555"/></svg></button>
</div>
<div class="mdis d-flex justify-content-end">
<button class="mdi" aria-label="还原窗口"><svg width="19" height="18"><path d="M7 7V4h9v7h-3M4 8h9v7H4z" fill="none" stroke="#555" stroke-width="2"/></svg></button>
<button class="mdi" aria-label="关闭窗口"><svg width="19" height="18"><path d="M4 4l10 10M14 4L4 14" stroke="#555" stroke-width="3"/></svg></button>
</div>
</div>
</nav>

<div class="tb d-flex align-items-center">
<div class="grip"></div>
<button class="btn startbtn"><svg><use href="#nx"/></svg><span>启动</span><svg class="dn"><use href="#dn"/></svg></button>
<div class="grp g3"><button class="btn" aria-label="新建"><svg><use href="#new"/></svg></button><button class="btn" aria-label="打开"><svg><use href="#open"/></svg></button><button class="btn" aria-label="保存"><svg><use href="#save"/></svg></button></div>
<i class="vr2"></i>
<div class="grp g3"><button class="btn" aria-label="剪切"><svg><use href="#cut"/></svg></button><button class="btn" aria-label="复制"><svg><use href="#copy"/></svg></button><button class="btn" aria-label="粘贴"><svg><use href="#paste"/></svg></button></div>
<i class="vr2"></i>
<div class="grp g3c"><button class="btn" aria-label="撤消"><svg><use href="#undo"/></svg></button><button class="btn cr" aria-label="撤消列表"><svg><use href="#dn"/></svg></button><button class="btn" aria-label="重做"><svg><use href="#redo"/></svg></button></div>
<i class="vr2"></i>
<div class="grp g1c"><button class="btn" aria-label="重复命令"><svg><use href="#pipe"/></svg></button><button class="btn cr" aria-label="命令列表"><svg><use href="#dn"/></svg></button></div>
<i class="vr2"></i>
<div class="grp g1"><button class="btn" aria-label="信息"><svg><use href="#info"/></svg></button></div>
<i class="vr2"></i>
<div class="search d-flex align-items-center justify-content-between"><input type="search" placeholder="查找命令" aria-label="查找命令"><svg><use href="#mag"/></svg></div>
<button class="btn cr pt-3 ms-1 me-auto" aria-label="查找选项"><svg><use href="#dn"/></svg></button>
<div class="dock d258"><div class="grip"></div><div class="grp gv"><button class="btn" aria-label="适合窗口"><svg><use href="#fit"/></svg></button><button class="btn cr" aria-label="视图列表"><svg><use href="#dn"/></svg></button><button class="btn" aria-label="定向视图"><svg><use href="#part3"/></svg></button><button class="btn cr" aria-label="定向列表"><svg><use href="#dn"/></svg></button><button class="btn" aria-label="着色"><svg><use href="#cube"/></svg></button><button class="btn cr" aria-label="着色列表"><svg><use href="#dn"/></svg></button><button class="btn" aria-label="剖切"><svg><use href="#clip"/></svg></button></div><button class="btn more" aria-label="更多"><svg class="chev"><use href="#ch"/></svg><svg class="dn"><use href="#dn"/></svg></button></div>
<div class="dock d62"><div class="grip"></div><div class="grp g1"><button class="btn" aria-label="图层"><svg><use href="#layer"/></svg></button></div><button class="btn more" aria-label="更多"><svg class="chev"><use href="#ch"/></svg><svg class="dn"><use href="#dn"/></svg></button></div>
</div>

<div class="tb d-flex align-items-center">
<div class="grip"></div>
<div class="grp gf"><button class="btn" aria-label="草图"><svg><use href="#plane"/></svg></button><button class="btn cr" aria-label="基准列表"><svg><use href="#dn"/></svg></button><button class="btn" aria-label="拉伸"><svg><use href="#extr"/></svg></button><button class="btn" aria-label="回转"><svg><use href="#revo"/></svg></button><button class="btn" aria-label="孔"><svg><use href="#hole"/></svg></button><button class="btn" aria-label="凸起"><svg><use href="#boss"/></svg></button><button class="btn" aria-label="筋板"><svg><use href="#rib"/></svg></button><button class="btn" aria-label="腔体"><svg><use href="#pock"/></svg></button></div>
<i class="vr2"></i>
<div class="grp gf2"><button class="btn" aria-label="偏置"><svg><use href="#offs"/></svg></button><button class="btn" aria-label="阵列特征"><svg><use href="#patt"/></svg></button><button class="btn" aria-label="阵列几何"><svg><use href="#geom"/></svg></button><button class="btn" aria-label="修剪体"><svg><use href="#trim"/></svg></button><button class="btn" aria-label="求和"><svg><use href="#unite"/></svg></button><button class="btn cr" aria-label="布尔列表"><svg><use href="#dn"/></svg></button><button class="btn" aria-label="拆分体"><svg><use href="#split"/></svg></button><button class="btn" aria-label="修剪片体"><svg><use href="#sheet"/></svg></button><button class="btn" aria-label="分割面"><svg><use href="#slab"/></svg></button><button class="btn" aria-label="抽壳"><svg><use href="#shell"/></svg></button><button class="btn" aria-label="加厚"><svg><use href="#thick"/></svg></button></div>
<i class="vr2"></i>
<div class="grp gf3"><button class="btn" aria-label="边倒圆"><svg><use href="#blend"/></svg></button><button class="btn" aria-label="面倒圆"><svg><use href="#fblend"/></svg></button><button class="btn" aria-label="拔模"><svg><use href="#draft"/></svg></button><button class="btn" aria-label="缩放体"><svg><use href="#scale"/></svg></button></div>
<button class="btn more" aria-label="更多"><svg class="chev"><use href="#ch"/></svg><svg class="dn"><use href="#dn"/></svg></button>
<div class="dock d70"><div class="grip"></div><div class="grp g1"><button class="btn" aria-label="曲面"><svg><use href="#surf"/></svg></button></div><button class="btn more" aria-label="更多"><svg class="chev"><use href="#ch"/></svg><svg class="dn"><use href="#dn"/></svg></button></div>
<div class="dock d62"><div class="grip"></div><div class="grp g1"><button class="btn" aria-label="装配"><svg><use href="#asm"/></svg></button></div><button class="btn more" aria-label="更多"><svg class="chev"><use href="#ch"/></svg><svg class="dn"><use href="#dn"/></svg></button></div>
</div>

<div class="sel d-flex align-items-center">
<select class="pick p1" aria-label="类型过滤器"><option>没有选择过滤器</option></select>
<select class="pick p2" aria-label="选择范围"><option>整个装配</option></select>
<button class="btn slim" aria-label="关联"><svg><use href="#lk"/></svg></button><i class="vr2"></i>
<button class="btn" aria-label="过滤"><svg><use href="#fl1"/></svg></button><button class="btn thin" aria-label="常规选择"><svg><use href="#fl2"/></svg></button><button class="btn cr" aria-label="过滤列表"><svg><use href="#dn"/></svg></button><button class="btn" aria-label="重置"><svg><use href="#fl3"/></svg></button><button class="btn" aria-label="取消选择"><svg><use href="#fl4"/></svg></button><i class="vr2"></i>
<button class="btn slim" aria-label="矩形选择"><svg><use href="#rsel"/></svg></button><button class="btn cr" aria-label="选择方式"><svg><use href="#dn"/></svg></button><i class="vr2"></i>
<button class="btn" aria-label="隐藏边"><svg><use href="#wire"/></svg></button><button class="btn" aria-label="高亮"><svg><use href="#hl"/></svg></button><i class="vr2"></i>
<button class="btn on" aria-label="启用捕捉点"><svg><use href="#s0"/></svg></button><button class="btn on" aria-label="端点"><svg><use href="#s1"/></svg></button><button class="btn on" aria-label="中点"><svg><use href="#s2"/></svg></button><button class="btn" aria-label="控制点"><svg><use href="#s3"/></svg></button><button class="btn on" aria-label="极点"><svg><use href="#s4"/></svg></button><button class="btn" aria-label="交点"><svg><use href="#s5"/></svg></button><button class="btn on" aria-label="圆弧中心"><svg><use href="#s6"/></svg></button><button class="btn" aria-label="象限点"><svg><use href="#s7"/></svg></button><button class="btn on" aria-label="现有点"><svg><use href="#s8"/></svg></button><button class="btn on" aria-label="曲线上的点"><svg><use href="#s9"/></svg></button><button class="btn" aria-label="面上的点"><svg><use href="#s10"/></svg></button>
</div>
<div class="sel plain d-flex align-items-center">
<button class="btn" aria-label="栅格"><svg><use href="#r0"/></svg></button><button class="btn" aria-label="实体"><svg><use href="#hole"/></svg></button><button class="btn" aria-label="圆角"><svg><use href="#r2"/></svg></button><button class="btn" aria-label="草图模式"><svg><use href="#r3"/></svg></button><button class="btn" aria-label="修剪"><svg><use href="#r4"/></svg></button><button class="btn" aria-label="矩形"><svg><use href="#r5"/></svg></button><button class="btn" aria-label="样条"><svg><use href="#r6"/></svg></button><button class="btn" aria-label="拐角"><svg><use href="#r7"/></svg></button>
<button class="btn cr edge ms-auto" aria-label="更多"><svg><use href="#dn"/></svg></button>
</div>
<div class="status d-flex align-items-center">
<span class="st1 text-nowrap">选择对象并使用 <span class="lat">MB3</span>，或者双击某一对象</span><i class="vr2 mx-0 me-auto"></i><i class="vr2 mx-0"></i><span class="st2"></span><i class="vr2 mx-0"></i>
<span class="st3 d-flex gap-1 ps-1"><svg width="22" height="22"><use href="#r3"/></svg><svg width="24" height="22"><use href="#full"/></svg></span>
</div>

<div class="d-flex">
<div class="rail d-flex flex-column">
<button class="cog flex-shrink-0 d-flex align-items-center justify-content-center" aria-label="资源条选项"><svg width="20" height="20"><circle cx="10" cy="10" r="6" fill="none" stroke="#222" stroke-width="2"/><circle cx="10" cy="10" r="8" fill="none" stroke="#222" stroke-width="2" stroke-dasharray="2.500 3.780"/><circle cx="10" cy="10" r="1.500"/></svg></button>
<button class="tab" aria-label="装配导航器"><svg><use href="#t0"/></svg></button>
<button class="tab" aria-label="约束导航器"><svg><use href="#t1"/></svg></button>
<button class="tab" aria-label="部件导航器"><svg><use href="#t2"/></svg></button>
<button class="tab" aria-label="重用库"><svg><use href="#t3"/></svg></button>
<button class="tab sp" aria-label="信息"><svg><use href="#t4"/></svg></button>
<button class="tab sp" aria-label="浏览器"><svg><use href="#t5"/></svg></button>
<button class="tab live" aria-label="历史记录"><svg><use href="#t6"/></svg></button>
<button class="tab" aria-label="系统材料"><svg><use href="#t7"/></svg></button>
<button class="tab" aria-label="加工向导"><svg><use href="#t8"/></svg></button>
<button class="tab" aria-label="机床"><svg><use href="#t9"/></svg></button>
<button class="tab" aria-label="角色"><svg><use href="#t10"/></svg></button>
<button class="tab" aria-label="场景一"><svg><use href="#t11"/></svg></button>
<button class="tab" aria-label="场景二"><svg><use href="#t11"/></svg></button>
<button class="tab" aria-label="场景三"><svg><use href="#t11"/></svg></button>
<button class="tab" aria-label="场景四"><svg><use href="#t11"/></svg></button>
<div class="railnav">
<svg class="tear" width="38" height="8"><path d="M0 3q8 6 18 0t20 0v5H0z" fill="#adadad"/><path d="M0 3q8 6 18 0t20 0" fill="none" stroke="#666" stroke-width="1.500"/></svg>
<button aria-label="顶部"><svg width="19" height="19"><path d="M5 5h9M4 13h11l-5-6z" fill="#aaa" stroke="#aaa"/></svg></button>
<button aria-label="向上"><svg width="19" height="19"><path d="M5 12h10l-5-6z" fill="#aaa"/></svg></button>
<button aria-label="向下"><svg width="19" height="19"><path d="M5 8h10l-5 5z" fill="#444"/></svg></button>
<button aria-label="底部"><svg width="19" height="19"><path d="M5 6h10l-5 5zM5 14h10" fill="#444" stroke="#444"/></svg></button>
</div>
</div>
<div class="gutter"></div>
<div class="view flex-grow-1">
<svg class="w-100" viewBox="51 596 993 1010" preserveAspectRatio="xMidYMid meet" role="img" aria-label="计算器模型">
<defs>
<linearGradient id="edgeB" gradientUnits="userSpaceOnUse" x1="530" y1="1375" x2="510" y2="1436"><stop offset="0" stop-color="#00cc0c"/><stop offset=".35" stop-color="#00c00a"/><stop offset="1" stop-color="#034e05"/></linearGradient>
<linearGradient id="edgeR" gradientUnits="userSpaceOnUse" x1="1205" y1="1090" x2="1245" y2="1108"><stop offset="0" stop-color="#00b80a"/><stop offset=".4" stop-color="#0ae016"/><stop offset="1" stop-color="#035c06"/></linearGradient>
</defs>
<g transform="translate(180 700) scale(.4464 .4337)">
<path d="M555 47Q470 50 442 150L330 530 58 1150C20 1230 40 1302 120 1325L905 1517Q1040 1545 1098 1425L1375 810 1440 700 1498 410Q1515 280 1405 253L575 49z" fill="#02b40a" stroke="#055a08" stroke-width="3"/>
<path d="M1490 410L1438 650 1440 700 1385 800 1380 740 1470 405z" fill="#039a0a"/>
<path d="M58 1150C20 1230 40 1302 120 1325L905 1517Q1040 1545 1098 1425L1068 1400Q1020 1485 905 1475L130 1285Q60 1260 62 1160z" fill="url(#edgeB)"/>
<path d="M1342 788L1380 790 1375 815 1098 1425 1066 1400z" fill="url(#edgeR)"/>
<path d="M555 47Q470 50 442 150L330 530 345 545 1345 788 1380 785 1480 405Q1500 290 1405 253z" fill="#06d014"/>
<path d="M1455 400L1353 784 1382 785 1482 405Q1490 330 1452 290Z" fill="#04c00e"/>
<path d="M575 70Q480 62 452 150L345 538 1345 782 1455 395Q1460 300 1395 275z" fill="#12de24"/>
<path d="M345 538L452 150Q480 62 575 70L1395 275Q1460 300 1455 395L1353 782" fill="none" stroke="#047808" stroke-width="2"/>
<path d="M335 545L1345 790 1068 1400Q1020 1485 905 1475L130 1285Q40 1250 62 1160z" fill="#00de10"/>
<path d="M335 545L62 1160Q40 1250 130 1285L905 1475Q1020 1485 1068 1400L1345 790" fill="none" stroke="#047808" stroke-width="2"/>
<path d="M330 530L345 535 1345 778 1380 784M328 540L345 545 1345 789 1372 794M575 49l-8 22M442 150l10 3M1405 253l-12 22M1455 397l43 8M55 1160l9-5M130 1285l-5 36M910 1475l-3 40M1070 1400l30 25" fill="none" stroke="#056408" stroke-width="2"/>
<path d="M575 48l830 206Q1440 262 1462 285" fill="none" stroke="#222c22" stroke-width="3"/>
<path d="M530 210L1355 410 1288 648 462 445z" fill="#14df26" stroke="#056008" stroke-width="2"/>
<path d="M530 210l8 4-66 232-10-1z" fill="#06a80e" stroke="#034a06" stroke-width="1.500"/><path d="M530 210L1355 410" stroke="#023c04" stroke-width="4"/>
<g id="keys">
<use href="#key" x="340" y="650" width="160" height="140"/><use href="#key" x="483" y="685" width="160" height="140"/><use href="#key" x="626" y="721" width="160" height="140"/><use href="#key" x="769" y="756" width="160" height="140"/><use href="#key" x="912" y="792" width="160" height="140"/><use href="#key" x="1055" y="827" width="160" height="140"/>
<use href="#key" x="281" y="782" width="160" height="140"/><use href="#key" x="424" y="817" width="160" height="140"/><use href="#key" x="567" y="853" width="160" height="140"/><use href="#key" x="710" y="888" width="160" height="140"/><use href="#key" x="853" y="924" width="160" height="140"/><use href="#key" x="996" y="959" width="160" height="140"/>
<use href="#key" x="222" y="914" width="160" height="140"/><use href="#key" x="365" y="949" width="160" height="140"/><use href="#key" x="508" y="985" width="160" height="140"/><use href="#key" x="651" y="1020" width="160" height="140"/><use href="#key" x="937" y="1091" width="160" height="140"/>
<use href="#key" x="163" y="1046" width="160" height="140"/><use href="#key" x="306" y="1081" width="160" height="140"/><use href="#key" x="449" y="1117" width="160" height="140"/><use href="#key" x="592" y="1152" width="160" height="140"/><use href="#key" x="878" y="1223" width="160" height="140"/>
</g>
<path d="M750 1265l-8 20q0 14 14 20l70 14q20 2 28-12l88-202q4-16-8-22z" fill="#028f08"/>
<path d="M750 1260q-10 18-2 28l14 10 66 14q16 0 22-12l88-200q4-16-8-24z" fill="#04c20c" stroke="#044c06" stroke-width="1.600"/>
<path d="M764 1288l64 13q10-1 14-10l88-196" fill="none" stroke="#1af02a" stroke-width="6" stroke-linejoin="round"/>
<path d="M840 1064l68 14q8 2 10 8 6 4 6 10l-2 8-76 176q-4 8-10 8-4 4-10 4l-60-14q-5-2-6-7-6-2-5-9l76-184q3-8 9-14z" fill="#00de10" stroke="#035006" stroke-width="1.800"/>
<path d="M752 1268l-4 18M768 1278l-3 20M830 1292l-2 20M846 1280l10 12M924 1098l14 4M848 1066l4-8M910 1078l6-6M832 1076l-8-2" fill="none" stroke="#044c06" stroke-width="1.800"/>
</g>
<g>
<path d="M108 1471l30 8 7 24-7 23-30-4-12-25z" fill="#dcdcdc" stroke="#aaa"/><path d="M96 1497l30 0 19 5M138 1479l-14 18-15 25M108 1471l18 26 10 28" fill="none" stroke="#b8b8b8"/>
<path d="M134 1517l15-31" stroke="#e04038" stroke-width="3"/><path d="M152 1480l-8 9 7 4z" fill="#c82820"/>
<path d="M130 1521l-42-9" stroke="#2c8a3c" stroke-width="3"/><path d="M82 1511l11-3-1 8z" fill="#187828"/>
<path d="M130 1519l-8-24" stroke="#1838a8" stroke-width="4"/><path d="M120 1490l-1 10 9-2z" fill="#1030a0" stroke="#1030a0" stroke-width="2"/>
<circle cx="131" cy="1523" r="5" fill="#ccc" stroke="#999"/>
<g font-family="Liberation Sans, sans-serif" font-size="14"><text x="70" y="1515" fill="#3c9a4c">Y</text><text x="150" y="1478" fill="#e04848">X</text><text x="115" y="1493" fill="#2040b0">Z</text></g>
</g>
</svg>
</div>
<div class="side">
<div class="pan"><div class="dots"></div>
<button aria-label="回到首个特征"><svg width="30" height="24"><path d="M4 1v22" stroke="#2a2a8a" stroke-width="2"/><path d="M16 4v16l-9-8zM27 4v16l-9-8z" fill="#d81c18"/></svg></button>
<button aria-label="上一特征"><svg width="30" height="24"><path d="M4 1v22" stroke="#2a2a8a" stroke-width="2"/><path d="M16 4v16l-9-8z" fill="#d81c18"/></svg></button>
<button aria-label="下一特征"><svg width="30" height="24"><path d="M18 4v16l9-8z" fill="#a88a90"/><path d="M29 1v22" stroke="#7a8484" stroke-width="2"/></svg></button>
<button aria-label="末个特征"><svg width="30" height="24"><path d="M7 4v16l9-8zM18 4v16l9-8z" fill="#a88a90"/><path d="M29 1v22" stroke="#7a8484" stroke-width="2"/></svg></button>
<button aria-label="播放"><svg width="30" height="24"><path d="M2 4v16l9-8z" fill="#a88a90"/><path d="M12 8h13v13H12z" fill="#7e8a8a"/><circle cx="25" cy="9" r="7" fill="#8b9696" stroke="#7a8484"/></svg></button>
<div class="play"><button aria-label="更新"><svg width="30" height="32"><path d="M4 9v16l9-8z" fill="#d81c18"/><path d="M24 0l-7 12 5-1-3 8 11-12z" fill="#f4dc30" stroke="#7c6a10"/><path d="M18 30q-7-8 2-10 6 0 8 6M24 25l5 4 1-7" fill="none" stroke="#14144a" stroke-width="3"/></svg></button>
<svg width="5" height="8" class="ms-2 mt-1"><path d="M5 0v8L0 4z"/></svg></div>
</div>
</div>
</div>

<div class="tb bot d-flex align-items-center">
<div class="grip"></div>
<button class="btn link" aria-label="关联曲线"><svg><use href="#chain"/></svg></button><i class="vr2 me-1 ms-1"></i>
<div class="grp gl"><button class="btn" aria-label="直线"><svg><use href="#b0"/></svg></button><button class="btn" aria-label="沿轴直线"><svg><use href="#b1"/></svg></button><button class="btn" aria-label="平行线"><svg><use href="#b2"/></svg></button><button class="btn" aria-label="垂直线"><svg><use href="#b3"/></svg></button><button class="btn" aria-label="切线"><svg><use href="#b4"/></svg></button><button class="btn" aria-label="双切线"><svg><use href="#b5"/></svg></button><button class="btn" aria-label="曲线切线"><svg><use href="#b6"/></svg></button><button class="btn" aria-label="曲线法线"><svg><use href="#b7"/></svg></button><button class="btn" aria-label="网格曲面"><svg><use href="#b8"/></svg></button></div>
<i class="vr2 ms-0"></i>
<div class="grp gf3"><button class="btn" aria-label="三点圆弧"><svg><use href="#b9"/></svg></button><button class="btn" aria-label="相切圆弧"><svg><use href="#b10"/></svg></button><button class="btn" aria-label="双切圆弧"><svg><use href="#b11"/></svg></button><button class="btn" aria-label="半径圆弧"><svg><use href="#b12"/></svg></button></div>
<i class="vr2"></i>
<div class="grp gf3"><button class="btn" aria-label="三点圆"><svg><use href="#c0"/></svg></button><button class="btn" aria-label="切圆"><svg><use href="#c1"/></svg></button><button class="btn" aria-label="三切圆"><svg><use href="#c2"/></svg></button><button class="btn" aria-label="双切半径圆"><svg><use href="#c3"/></svg></button></div>
<i class="vr2"></i>
<div class="grp gc"><button class="btn" aria-label="圆心点圆"><svg><use href="#c4"/></svg></button><button class="btn" aria-label="圆心半径圆"><svg><use href="#c5"/></svg></button><button class="btn" aria-label="圆心切圆"><svg><use href="#c6"/></svg></button></div>
<button class="btn cr pt-3 me-auto" aria-label="更多"><svg><use href="#dn"/></svg></button>
<div class="dock d87"><div class="grip"></div><div class="grp g1"><button class="btn" aria-label="基本直线"><svg><use href="#c7"/></svg></button></div><button class="btn more ps-3" aria-label="更多"><svg class="chev"><use href="#ch"/></svg><svg class="dn"><use href="#dn"/></svg></button></div>
<div class="dock d62"><div class="grip"></div><div class="grp g1"><button class="btn" aria-label="工具"><svg><use href="#wr"/></svg></button></div><button class="btn more" aria-label="更多"><svg class="chev"><use href="#ch"/></svg><svg class="dn"><use href="#dn"/></svg></button></div>
</div>
</main>
<footer class="text-center"><p class="follow m-0">关注我，更多精彩内容</p></footer>
<script src="https://cdn.jsdelivr.net/npm/bootstrap@5.3.0/dist/js/bootstrap.bundle.min.js"></script>
</body>
</html>
